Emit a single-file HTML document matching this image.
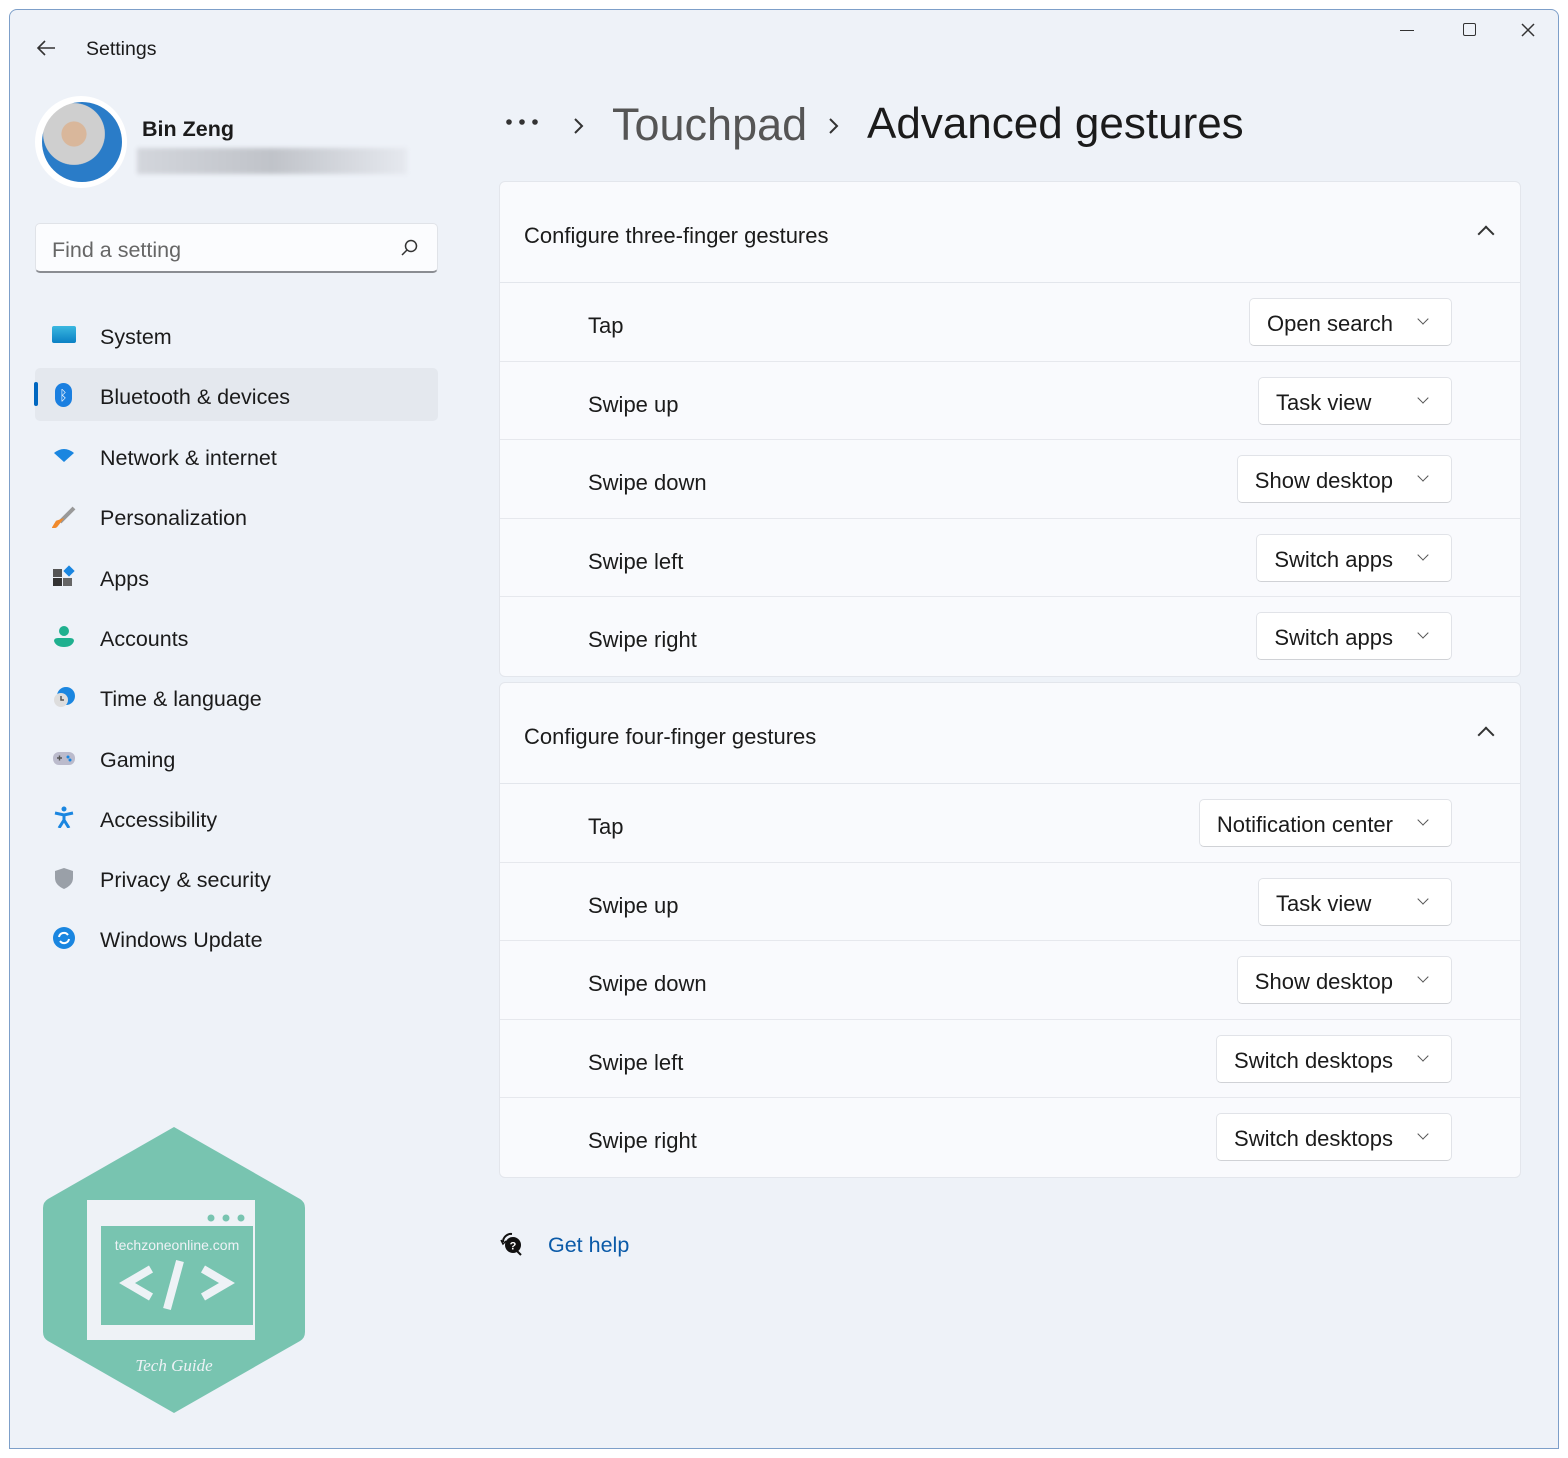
<!DOCTYPE html>
<html><head><meta charset="utf-8"><style>
*{box-sizing:border-box;margin:0;padding:0}
body{width:1568px;height:1458px;background:#fff;font-family:"Liberation Sans",sans-serif;color:#1b1b1b;position:relative;overflow:hidden}
.win{position:absolute;left:9px;top:9px;width:1550px;height:1440px;background:#eef2f8;border:1.5px solid #7d9fc9;border-radius:8px 8px 0 0;overflow:hidden}
.a{position:absolute}
.nav{position:absolute;left:90px;font-size:21.5px;color:#1b1b1b}
.ico{position:absolute;left:42px;width:24px;height:22px}
.card{position:absolute;left:499px;width:1022px;background:#f9fafd;border:1px solid #e3e6ec;border-radius:6px}
.hdr{height:101px;position:relative;border-bottom:1px solid #e3e6ec}
.hdr span{position:absolute;left:24px;top:41px;font-size:22px}
.hdr i{position:absolute;right:28px;top:46px;width:12px;height:12px;border-left:2px solid #333;border-top:2px solid #333;transform:rotate(45deg)}
.row{height:78.5px;position:relative;border-bottom:1px solid #e6e8ed}
.row:last-child{border-bottom:none}
.row .l{position:absolute;left:88px;top:30px;font-size:22px}
.dd{position:absolute;right:68px;top:15px;height:48px;min-width:194px;background:#fff;border:1px solid #e1e3e8;border-bottom-color:#d0d2d6;border-radius:5px;font-size:22px;padding:12px 58px 0 17px}
.dd:after{content:"";position:absolute;right:24px;top:16px;width:7px;height:7px;border-right:1.5px solid #555;border-bottom:1.5px solid #555;transform:rotate(45deg)}
</style></head><body>
<div class="win">
<svg class="a" style="left:25px;top:28px" width="22" height="20"><path d="M20 10H3M10 3L3 10L10 17" stroke="#333" stroke-width="1.6" fill="none"/></svg>
<div class="a" style="left:76px;top:28px;font-size:19.5px">Settings</div>
<div class="a" style="left:1390px;top:20px;width:14px;border-top:1.5px solid #333"></div>
<div class="a" style="left:1453px;top:13px;width:13px;height:13px;border:1.5px solid #333;border-radius:2px"></div>
<svg class="a" style="left:1510px;top:12px" width="16" height="16"><path d="M2 2L14 14M14 2L2 14" stroke="#333" stroke-width="1.5"/></svg>
<div class="a" style="left:25px;top:86px;width:92px;height:92px;border-radius:50%;background:#fff"></div>
<div class="a" style="left:32px;top:92px;width:80px;height:80px;border-radius:50%;background:radial-gradient(circle at 40% 40%,#d9b79b 0 18%,#cfcfcf 19% 45%,#2a7cc8 46%)"></div>
<div class="a" style="left:132px;top:107px;font-size:21.5px;font-weight:bold">Bin Zeng</div>
<div class="a" style="left:127px;top:138px;width:270px;height:26px;background:linear-gradient(90deg,#d3d6dc,#c0c3c9 50%,#e6e9ef);filter:blur(2px)"></div>
<div class="a" style="left:25px;top:213px;width:403px;height:50px;background:#fbfcfe;border:1px solid #e0e3e8;border-bottom:2px solid #8a8d92;border-radius:5px"></div>
<div class="a" style="left:42px;top:228px;font-size:21.5px;color:#666">Find a setting</div>
<svg class="a" style="left:390px;top:228px" width="20" height="20"><circle cx="11" cy="8" r="5.5" stroke="#333" stroke-width="1.5" fill="none"/><path d="M7 12L2 17" stroke="#333" stroke-width="1.5"/></svg>
<div class="a" style="left:25px;top:358px;width:403px;height:53px;background:#e4e8ee;border-radius:5px"></div>
<div class="a" style="left:24px;top:372px;width:4px;height:24px;background:#0067c0;border-radius:2px"></div>
<div class="ico" style="top:316px;height:17px;background:linear-gradient(#3ab8e0,#0a80c4);border-radius:2px"></div>
<div class="ico" style="top:373px;left:45px;width:17px;height:24px;background:#1a7fe0;border-radius:9px;color:#fff;font-size:14px;text-align:center;line-height:24px">ᛒ</div>
<svg class="ico" style="top:437px"><path d="M2 6Q12-2 22 6L12 15Z" fill="#1a86e0"/></svg>
<svg class="ico" style="top:496px"><path d="M22 2L8 16" stroke="#999" stroke-width="4"/><path d="M8 15L4 20L2 21L5 16Z" fill="#f08a2c" stroke="#f08a2c" stroke-width="3"/></svg>
<svg class="ico" style="top:555px"><rect x="1" y="4" width="9" height="8" fill="#555"/><rect x="1" y="13" width="9" height="8" fill="#333"/><rect x="11" y="13" width="9" height="8" fill="#666"/><rect x="13" y="2" width="8" height="8" fill="#1a86e0" transform="rotate(45 17 6)"/></svg>
<svg class="ico" style="top:615px"><circle cx="12" cy="6" r="5" fill="#1fb08f"/><path d="M2 16Q2 13 6 13H18Q22 13 22 16Q20 22 12 22Q4 22 2 16Z" fill="#1fb08f"/></svg>
<svg class="ico" style="top:676px"><circle cx="14" cy="10" r="9" fill="#1a86e0"/><circle cx="9" cy="14" r="7" fill="#ddd"/><path d="M9 10V14H12" stroke="#555" stroke-width="1.5" fill="none"/></svg>
<svg class="ico" style="top:738px"><rect x="1" y="4" width="22" height="13" rx="6" fill="#bbc"/><circle cx="16" cy="9" r="1.5" fill="#1a86e0"/><circle cx="18" cy="12" r="1.5" fill="#1a86e0"/><path d="M5 10H10M7.5 7.5V12.5" stroke="#555" stroke-width="1.4"/></svg>
<svg class="ico" style="top:796px"><circle cx="12" cy="3" r="2.5" fill="#1a86e0"/><path d="M3 7L12 9L21 7M12 9V14L7 22M12 14L17 22" stroke="#1a86e0" stroke-width="3" fill="none"/></svg>
<svg class="ico" style="top:857px"><path d="M12 1L21 4V11Q21 18 12 22Q3 18 3 11V4Z" fill="#9aa0a8"/></svg>
<svg class="ico" style="top:917px"><circle cx="12" cy="11" r="11" fill="#1a86e0"/><path d="M7 10A5 5 0 0 1 16 8M17 12A5 5 0 0 1 8 14" stroke="#fff" stroke-width="2" fill="none"/></svg>
<div class="nav" style="top:315px">System</div>
<div class="nav" style="top:375px">Bluetooth &amp; devices</div>
<div class="nav" style="top:436px">Network &amp; internet</div>
<div class="nav" style="top:496px">Personalization</div>
<div class="nav" style="top:557px">Apps</div>
<div class="nav" style="top:617px">Accounts</div>
<div class="nav" style="top:677px">Time &amp; language</div>
<div class="nav" style="top:738px">Gaming</div>
<div class="nav" style="top:798px">Accessibility</div>
<div class="nav" style="top:858px">Privacy &amp; security</div>
<div class="nav" style="top:918px">Windows Update</div>
<svg class="a" style="left:33px;top:1113px" width="262" height="294"><path d="M131 4L257 76Q262 79 262 85V209Q262 215 257 218L131 290L5 218Q0 215 0 209V85Q0 79 5 76Z" fill="#78c4b0"/><rect x="44" y="77" width="168" height="140" fill="#eef2f6"/><rect x="58" y="103" width="152" height="99" fill="#78c4b0"/><circle cx="168" cy="95" r="3.5" fill="#78c4b0"/><circle cx="183" cy="95" r="3.5" fill="#78c4b0"/><circle cx="198" cy="95" r="3.5" fill="#78c4b0"/><path d="M108 146L84 160L108 174M160 146L184 160L160 174M137 138L124 186" stroke="#eef2f6" stroke-width="8" fill="none"/><text x="134" y="127" fill="#eef2f6" font-size="14" text-anchor="middle" font-family="Liberation Sans">techzoneonline.com</text><text x="131" y="248" fill="#eef2f6" font-size="17" font-style="italic" text-anchor="middle" font-family="Liberation Serif">Tech Guide</text></svg>
<svg class="a" style="left:494px;top:106px" width="40" height="12"><circle cx="5" cy="6" r="2.8" fill="#333"/><circle cx="18" cy="6" r="2.8" fill="#333"/><circle cx="31" cy="6" r="2.8" fill="#333"/></svg>
<svg class="a" style="left:562px;top:106px" width="14" height="20"><path d="M3 3L10 10L3 17" stroke="#333" stroke-width="2" fill="none"/></svg>
<div class="a" style="left:602px;top:89px;font-size:45px;color:#555">Touchpad</div>
<svg class="a" style="left:817px;top:106px" width="14" height="20"><path d="M3 3L10 10L3 17" stroke="#333" stroke-width="2" fill="none"/></svg>
<div class="a" style="left:857px;top:89px;font-size:44px;color:#1b1b1b">Advanced gestures</div>
<svg class="a" style="left:488px;top:1220px" width="28" height="28"><path d="M5 12A8 8 0 0 1 14 4" stroke="#111" stroke-width="2" fill="none"/><path d="M3 10L5 14L8 11" stroke="#111" stroke-width="1.5" fill="none"/><circle cx="15" cy="15" r="8" fill="#111"/><path d="M19 21L23 25" stroke="#111" stroke-width="2"/><text x="15" y="19.5" fill="#fff" font-size="11" font-weight="bold" text-anchor="middle">?</text></svg>
<div class="a" style="left:538px;top:1223px;font-size:21.5px;color:#0a5aa8">Get help</div>
</div>
<div class="card" style="top:181px">
<div class="hdr"><span>Configure three-finger gestures</span><i></i></div>
<div class="row"><span class="l">Tap</span><div class="dd">Open search</div></div>
<div class="row"><span class="l">Swipe up</span><div class="dd">Task view</div></div>
<div class="row"><span class="l">Swipe down</span><div class="dd">Show desktop</div></div>
<div class="row"><span class="l">Swipe left</span><div class="dd">Switch apps</div></div>
<div class="row"><span class="l">Swipe right</span><div class="dd">Switch apps</div></div>
</div>
<div class="card" style="top:682px">
<div class="hdr"><span>Configure four-finger gestures</span><i></i></div>
<div class="row"><span class="l">Tap</span><div class="dd">Notification center</div></div>
<div class="row"><span class="l">Swipe up</span><div class="dd">Task view</div></div>
<div class="row"><span class="l">Swipe down</span><div class="dd">Show desktop</div></div>
<div class="row"><span class="l">Swipe left</span><div class="dd">Switch desktops</div></div>
<div class="row"><span class="l">Swipe right</span><div class="dd">Switch desktops</div></div>
</div>
</body></html>
